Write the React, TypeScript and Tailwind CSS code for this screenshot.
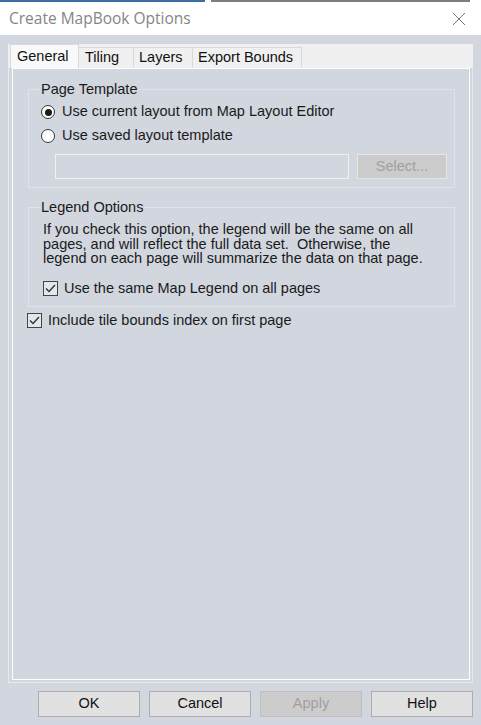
import React from "react"

const font = "font-['Liberation_Sans',Arial,sans-serif]"

function Radio({ checked, label }: { checked?: boolean; label: string }) {
  return (
    <label className="flex h-[20px] items-center gap-[7px] text-[14.5px] text-[#1a1a1a]">
      <span className="flex h-[14px] w-[14px] items-center justify-center rounded-full border border-[#333] bg-white">
        {checked && <span className="h-[7px] w-[7px] rounded-full bg-[#1a1a1a]" />}
      </span>
      {label}
    </label>
  )
}

function Check({ label }: { label: string }) {
  return (
    <label className="flex h-[16px] items-center gap-[6px] text-[14.5px] text-[#1a1a1a]">
      <span className="flex h-[15px] w-[15px] items-center justify-center border border-[#444] bg-[#e4e6ea]">
        <svg width="11" height="9" viewBox="0 0 11 9" fill="none">
          <path d="M1 4.5 L4 7.5 L10 1" stroke="#333" strokeWidth="1.4" />
        </svg>
      </span>
      {label}
    </label>
  )
}

function Btn({ label, disabled }: { label: string; disabled?: boolean }) {
  return (
    <button
      className={
        disabled
          ? "h-[26px] w-[102px] border border-[#bfbfbf] bg-[#cccccc] text-[14.5px] text-[#a0a0a0]"
          : "h-[26px] w-[102px] border border-[#adadad] bg-[#e1e1e1] text-[14.5px] text-[#111]"
      }
    >
      {label}
    </button>
  )
}

export default function App() {
  return (
    <div className={`flex h-[725px] w-[481px] flex-col bg-[#d2d6de] ${font}`}>
      {/* window title */}
      <div className="flex h-[2px] bg-white">
        <div className="w-[205px] bg-[#3a6ea5]" />
        <div className="ml-[6px] w-[259px] bg-[#7d7d7d]" />
      </div>
      <div className="flex h-[33px] items-center justify-between bg-white pl-[9px] pr-[15px]">
        <span className="font-['Open_Sans',sans-serif] text-[15.5px] text-[#858585]">Create MapBook Options</span>
        <svg width="14" height="14" viewBox="0 0 14 14" fill="none">
          <path d="M1 1 L13 13 M13 1 L1 13" stroke="#777" strokeWidth="1" />
        </svg>
      </div>

      <div className="flex flex-1 flex-col px-[8px] pb-[8px] pt-[9px]">
        {/* tabs */}
        <div className="flex h-[24px] w-[465px] items-end bg-[#f0f0f0] pl-[2px] text-[14.5px] text-[#111]">
          <div className="flex h-[24px] w-[69px] items-center border-x border-t border-[#d9d9d9] bg-[#f9f9f9] pl-[6px]">
            General
          </div>
          <div className="flex h-[21px] w-[55px] items-center border-r border-t border-[#d9d9d9] pl-[6px]">Tiling</div>
          <div className="flex h-[21px] w-[59px] items-center border-r border-t border-[#d9d9d9] pl-[5px]">Layers</div>
          <div className="flex h-[21px] w-[109px] items-center border-r border-t border-[#d9d9d9] pl-[5px]">
            Export Bounds
          </div>
        </div>

        {/* tab page */}
        <div className="flex h-[615px] w-[465px] flex-col border-x border-b border-[#e8e8e8] pb-[2px] pl-[3px] pr-[2px]">
          <div className="flex flex-1 flex-col border border-white text-[14.5px] text-[#1a1a1a]">
            <fieldset className="ml-[15px] mt-[13px] w-[427px] border border-[#dfe2e7] pb-[8px] pl-[12px]">
              <legend className="ml-[-1px] px-[1px] leading-[15px]">Page Template</legend>
              <div className="mt-[5px]">
                <Radio checked label="Use current layout from Map Layout Editor" />
              </div>
              <div className="mt-[4px]">
                <Radio label="Use saved layout template" />
              </div>
              <div className="mt-[8px] flex gap-[8px] pl-[14px]">
                <div className="h-[25px] w-[294px] border border-[#f0f0f0]" />
                <button className="h-[25px] w-[90px] border border-[#e6e6e6] bg-[#cccccc] text-[14.5px] text-[#a0a0a0]">
                  Select...
                </button>
              </div>
            </fieldset>

            <fieldset className="ml-[15px] mt-[12px] w-[427px] border border-[#dfe2e7] pb-[9px] pl-[14px]">
              <legend className="ml-[-3px] px-[1px] leading-[15px]">Legend Options</legend>
              <p className="mt-[7px] leading-[14.5px]">
                If you check this option, the legend will be the same on all
                <br />
                pages, and will reflect the full data set.&nbsp; Otherwise, the
                <br />
                legend on each page will summarize the data on that page.
              </p>
              <div className="mt-[15px]">
                <Check label="Use the same Map Legend on all pages" />
              </div>
            </fieldset>

            <div className="ml-[14px] mt-[6px]">
              <Check label="Include tile bounds index on first page" />
            </div>
          </div>
        </div>

        <div className="mt-[8px] flex justify-end gap-[9px]">
          <Btn label="OK" />
          <Btn label="Cancel" />
          <Btn label="Apply" disabled />
          <Btn label="Help" />
        </div>
      </div>
    </div>
  )
}
